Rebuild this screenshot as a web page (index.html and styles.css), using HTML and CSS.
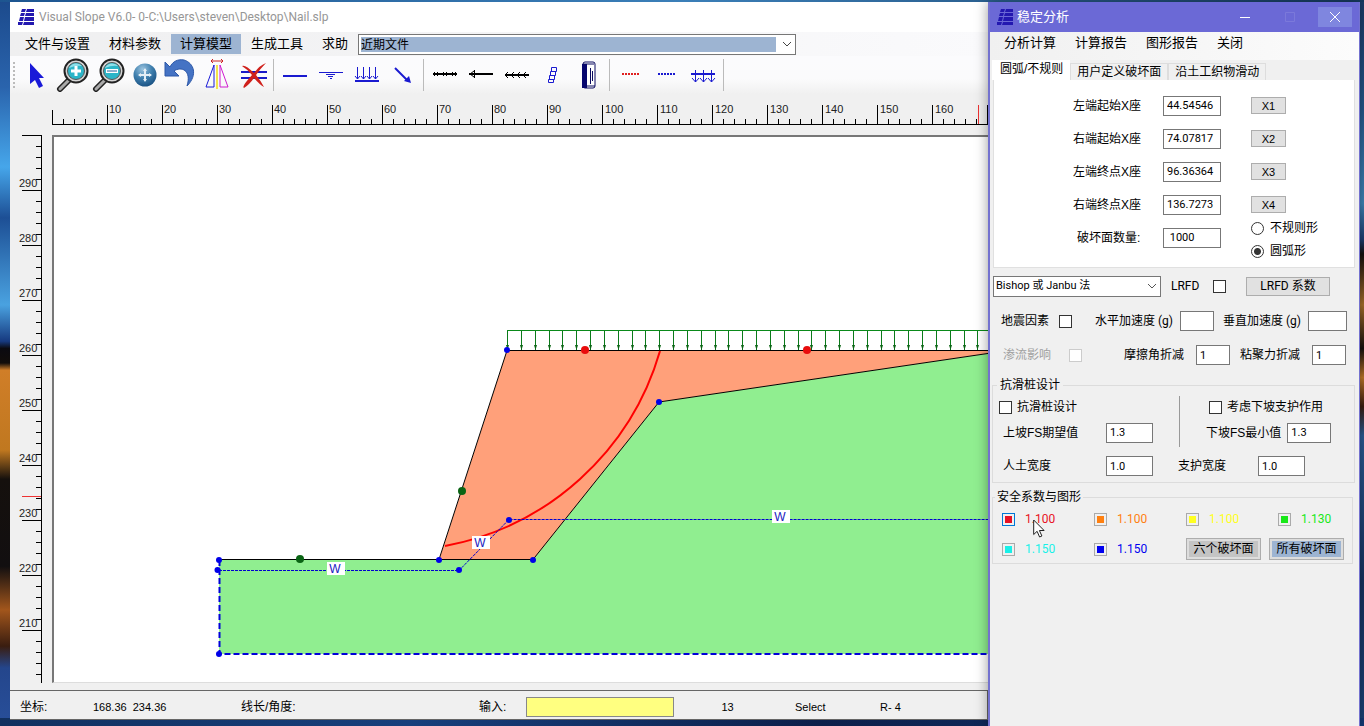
FILE: index.html
```html
<!DOCTYPE html>
<html lang="zh-CN">
<head>
<meta charset="utf-8">
<title>Visual Slope V6.0</title>
<link rel="stylesheet" href="styles.css">
</head>
<body>
<svg class="defs" aria-hidden="true">
  <defs>
    <symbol id="logo" viewBox="0 0 16 16">
      <g fill="#2318b0"><path d="M4 0h4l-1 3H3zM9 0h7v3H8zM3 4h4l-1 3H2zM8 4h8v3H7zM2 8h4l-1 4H1zM7 8h9v4H6zM0 13h5l-1 3H0zM6 13h10v3H5z"/></g>
    </symbol>
    <symbol id="lens" viewBox="0 0 34 34">
      <path d="M14 21L4 31" stroke="#222" stroke-width="6" stroke-linecap="round"/>
      <path d="M13 22L4 31" stroke="#aaa" stroke-width="3" stroke-linecap="round"/>
      <circle cx="20" cy="13" r="11.500" fill="#d5d5d5" stroke="#222" stroke-width="2"/>
      <circle cx="20" cy="13" r="8.500" fill="#2cb5c8" stroke="#555"/>
      <path d="M13 10a8 8 0 0 1 13-2q-6-1-13 2" fill="#8fe0ea"/>
    </symbol>
    <radialGradient id="ball" cx=".4" cy=".25" r=".8"><stop offset="0" stop-color="#9cc4df"/><stop offset=".5" stop-color="#3f7fae"/><stop offset="1" stop-color="#174e80"/></radialGradient>
  </defs>
</svg>
<div class="desktop">
  <main class="window">
    <header class="titlebar"><svg class="logo"><use href="#logo"/></svg><span>Visual Slope V6.0- 0-C:\Users\steven\Desktop\Nail.slp</span></header>
    <nav class="menubar">
      <button>文件与设置</button><button>材料参数</button><button class="active">计算模型</button><button>生成工具</button><button>求助</button>
      <span class="combo recent"><select aria-label="近期文件"><option>近期文件</option></select><svg viewBox="0 0 10 6"><path d="M1 1l4 4 4-4" fill="none" stroke="#444"/></svg></span>
    </nav>
    <div class="toolbar">
      <span class="grip"></span>
      <button aria-label="选择"><svg viewBox="0 0 34 34"><path d="M10 5v21l5-4 4 8 4-2-4-8h5z" fill="#1a1ad8"/></svg></button>
      <button aria-label="放大"><svg viewBox="0 0 34 34"><use href="#lens"/><path d="M20 8v10M15 13h10" stroke="#fff" stroke-width="3"/></svg></button>
      <button aria-label="缩小"><svg viewBox="0 0 34 34"><use href="#lens"/><path d="M14 13h12" stroke="#fff" stroke-width="4"/><path d="M15 13h10" stroke="#1c5f9c" stroke-width="1"/></svg></button>
      <button aria-label="平移"><svg viewBox="0 0 34 34"><circle cx="17" cy="17" r="11.500" fill="url(#ball)"/><path d="M17 11v12M11 17h12" stroke="#e4eef6" stroke-width="2"/><path d="M15 13l2-3 2 3zM15 21l2 3 2-3zM13 15l-3 2 3 2zM21 15l3 2-3 2z" fill="#e4eef6"/></svg></button>
      <button aria-label="撤销"><svg viewBox="0 0 34 34"><path d="M1 4v14h14l-5-5c7-5 18-1 13 15 11-11 7-23-3-26-6-1-11 1-14 7z" fill="#4573c4" stroke="#2d58a8"/></svg></button>
      <button aria-label="镜像"><svg viewBox="0 0 34 34" fill="none"><path d="M14 7v22H6z" stroke="#1a1ad8"/><path d="M20 7v22h8z" stroke="#d01ad0"/><path d="M17 7v24" stroke="#f3e34a" stroke-width="2"/><path d="M11 3h12M13 1l-2 2 2 2M21 1l2 2-2 2" stroke="#c22"/></svg></button>
      <button aria-label="删除"><svg viewBox="0 0 34 34"><path d="M5 14h26M5 20h26" stroke="#1a1ac8" stroke-width="2"/><path d="M6 8q3-2 12 7Q24 7 30 5q-5 5-10 12 5 6 8 12-4-2-10-9-5 7-10 10-3-1 8-13-5-6-10-9z" fill="#d0211c"/></svg></button>
      <span class="sep"></span>
      <button aria-label="线"><svg viewBox="0 0 34 34"><path d="M5 18h24" stroke="#1a1ad0" stroke-width="2"/></svg></button>
      <button aria-label="水位"><svg viewBox="0 0 34 34"><path d="M5 14.500h24M12 16.500h9M14 18.500h5M16 20.500h2" stroke="#1a1ad0"/></svg></button>
      <button aria-label="荷载"><svg viewBox="0 0 34 34" fill="none" stroke="#1a1ad0"><path d="M5 23h24" stroke-width="2"/><path d="M7.500 9v12M13.500 9v12M19.500 9v12M25.500 9v12M5 18l2.500 3 2.500-3M11 18l2.500 3 2.500-3M17 18l2.500 3 2.500-3M23 18l2.500 3 2.500-3"/></svg></button>
      <button aria-label="集中力"><svg viewBox="0 0 34 34"><path d="M9 10l13 13" stroke="#1a1ad0" stroke-width="2"/><path d="M25 25l-7-2 5-5z" fill="#1a1ad0"/></svg></button>
      <span class="sep"></span>
      <button aria-label="土钉"><svg viewBox="0 0 34 34"><path d="M5 16h24" stroke="#000" stroke-width="2"/><path d="M6 14l4 4M6 18l4-4M15 14l4 4M15 18l4-4M24 14l4 4M24 18l4-4" stroke="#000"/></svg></button>
      <button aria-label="锚杆"><svg viewBox="0 0 34 34"><path d="M5 16h24" stroke="#000" stroke-width="2"/><path d="M10.500 12v8M10 13l-4 3 4 3" fill="none" stroke="#000"/></svg></button>
      <button aria-label="土工织物"><svg viewBox="0 0 34 34"><path d="M5 17h24" stroke="#000" stroke-width="2"/><path d="M8 14l-3 3 3 3M14 14l-3 3 3 3M20 14l-3 3 3 3M26 14l-3 3 3 3" fill="none" stroke="#000"/></svg></button>
      <button aria-label="挡墙"><svg viewBox="0 0 34 34" fill="none" stroke="#1a1ad0"><path d="M15.500 9.500h5v4h-5zM14.500 13.500h5v4h-5zM13.500 17.500h5v4h-5zM12.500 21.500h5v3h-5z"/></svg></button>
      <button aria-label="桩"><svg viewBox="0 0 34 34"><rect x="11" y="4" width="12" height="26" rx="2" fill="#fff" stroke="#0a0a60"/><path d="M10 6h5v24h-5z" fill="#06066e"/><path d="M11 6h11M18.500 10v16M20.500 13v10M14 28h9" stroke="#0a0a60"/></svg></button>
      <span class="sep"></span>
      <button aria-label="红点线"><svg viewBox="0 0 34 34"><path d="M8 16h18" stroke="#e02020" stroke-width="2" stroke-dasharray="2 1"/></svg></button>
      <button aria-label="蓝点线"><svg viewBox="0 0 34 34"><path d="M8 16h18" stroke="#1a1ad0" stroke-width="2" stroke-dasharray="2 1"/></svg></button>
      <button aria-label="分布力"><svg viewBox="0 0 34 34" fill="none" stroke="#1a1ad0"><path d="M5 16h24" stroke-width="2"/><path d="M9.500 12v12M17.500 12v12M25.500 12v12M6 20l3.500 4 3.500-4M14 20l3.500 4 3.500-4M22 20l3.500 4 3.500-4"/></svg></button>
      <span class="sep"></span>
    </div>

    <svg class="ruler-x">
      <defs><pattern id="tx" width="55" height="36" patternUnits="userSpaceOnUse"><path d="M.5 11v20" stroke="#000"/><path d="M11.500 25v5M22.500 25v5M33.500 25v5M44.500 25v5" stroke="#000"/></pattern></defs>
      <g transform="translate(42 0)">
        <rect x="2" width="3000" height="36" fill="url(#tx)"/><path d="M.5 16v14M0 30.500h3000" stroke="#000"/><path d="M926.500 11v19" stroke="#e33"/>
        <text x="57" y="19">10</text><text x="112" y="19">20</text><text x="167" y="19">30</text><text x="222" y="19">40</text><text x="277" y="19">50</text><text x="332" y="19">60</text><text x="387" y="19">70</text><text x="442" y="19">80</text><text x="497" y="19">90</text><text x="553" y="19">100</text><text x="608" y="19">110</text><text x="663" y="19">120</text><text x="718" y="19">130</text><text x="773" y="19">140</text><text x="828" y="19">150</text><text x="883" y="19">160</text>
      </g>
    </svg>
    <div class="workspace">
      <svg class="ruler-y">
        <defs><pattern id="ty" width="42" height="55" patternUnits="userSpaceOnUse"><path d="M12 .5h19" stroke="#000"/><path d="M26 11.500h5M26 22.500h5M26 33.500h5M26 44.500h5" stroke="#000"/></pattern></defs>
        <rect width="42" height="100%" fill="url(#ty)"/><path d="M31.500 0v2000" stroke="#000"/><path d="M12 361.500h19" stroke="#e33"/>
        <text x="9" y="52">290</text><text x="9" y="107">280</text><text x="9" y="162">270</text><text x="9" y="217">260</text><text x="9" y="272">250</text><text x="9" y="327">240</text><text x="9" y="382">230</text><text x="9" y="437">220</text><text x="9" y="492">210</text>
      </svg>
      <div class="canvas">
        <svg>
          <defs><pattern id="load" x="506" y="330" width="83" height="20" patternUnits="userSpaceOnUse"><path d="M1.500 0v20M15.500 0v20M29.500 0v20M43.500 0v20M56.500 0v20M70.500 0v20" stroke="#0a7a1a"/><path d="M0 15h3l-1.500 5zM14 15h3l-1.500 5zM28 15h3l-1.500 5zM42 15h3l-1.500 5zM55 15h3l-1.500 5zM69 15h3l-1.500 5z" fill="#0a6414"/></pattern></defs>
          <g transform="translate(-54 -137)">
            <path d="M219 560H533L659 402 1008 350.500H3000V654H219z" fill="#90ee90"/>
            <path d="M507 350.500H1008L659 402 533 560H439z" fill="#ffa07a"/>
            <path d="M219 559.500H533L659 402 1008 350.500M439 559.500L507 350.500H3000" fill="none" stroke="#000"/>
            <rect x="506" y="330" width="2500" height="20" fill="url(#load)"/><path d="M507 330.500H3000" stroke="#0a8a1a"/>
            <path d="M445 546A277 277 0 0 0 660 351" fill="none" stroke="#f00" stroke-width="2"/>
            <path d="M219 570.500H459L509 519.500H3000" fill="none" stroke="#0000d0" stroke-dasharray="3 1"/>
            <path d="M219.500 560V654H3000" fill="none" stroke="#0000d8" stroke-width="2" stroke-dasharray="6 3"/>
            <g fill="#0000e8"><circle cx="219" cy="560" r="3"/><circle cx="217.500" cy="570" r="3"/><circle cx="219" cy="654" r="3"/><circle cx="439" cy="560" r="3"/><circle cx="459" cy="570" r="3"/><circle cx="509" cy="520" r="3"/><circle cx="533" cy="560" r="3"/><circle cx="659" cy="402" r="3"/><circle cx="507" cy="350" r="3"/></g>
            <g fill="#0a6414"><circle cx="300" cy="559" r="4"/><circle cx="462" cy="491" r="4"/></g>
            <g fill="#e80c0c"><circle cx="585" cy="350" r="4"/><circle cx="807" cy="350" r="4"/></g>
            <g fill="#fff"><path d="M327 562h18v13h-18zM472 536h18v13h-18zM772 510h18v13h-18z"/></g>
            <g class="water"><text x="335" y="573">W</text><text x="480" y="547">W</text><text x="780" y="521">W</text></g>
          </g>
        </svg>
      </div>
    </div>
    <footer class="status">
      <span class="s-name">坐标:</span><span class="s-pos">168.36&nbsp; 234.36</span><span class="s-len">线长/角度:</span><label class="s-in">输入: <input type="text"></label><span class="s-num">13</span><span class="s-mode">Select</span><span>R- 4</span>
    </footer>
  </main>

  <aside class="dialog">
    <header class="dialog-title"><svg class="logo"><use href="#logo"/></svg><h1>稳定分析</h1>
      <button aria-label="最小化"><svg viewBox="0 0 10 10"><path d="M0 5.500h10" stroke="#fff"/></svg></button>
      <button aria-label="最大化" disabled><svg viewBox="0 0 10 10"><path d="M.5.5h9v9h-9z" fill="none" stroke="#7b79da"/></svg></button>
      <button class="close" aria-label="关闭"><svg viewBox="0 0 10 10"><path d="M0 0l10 10M10 0L0 10" stroke="#fff"/></svg></button>
    </header>
    <nav class="dialog-menu"><button>分析计算</button><button>计算报告</button><button>图形报告</button><button>关闭</button></nav>
    <div class="tabs" role="tablist"><button role="tab" aria-selected="true">圆弧/不规则</button><button role="tab">用户定义破坏面</button><button role="tab">沿土工织物滑动</button></div>
    <section class="panel">
      <label for="x1">左端起始X座</label><input id="x1" type="text" value="44.54546"><button>X1</button>
      <label for="x2">右端起始X座</label><input id="x2" type="text" value="74.07817"><button>X2</button>
      <label for="x3">左端终点X座</label><input id="x3" type="text" value="96.36364"><button>X3</button>
      <label for="x4">右端终点X座</label><input id="x4" type="text" value="136.7273"><button>X4</button>
      <label for="n" class="count">破坏面数量:</label><input id="n" type="text" value=" 1000">
      <div class="radios"><label><input type="radio" name="shape">不规则形</label><label><input type="radio" name="shape" checked>圆弧形</label></div>
    </section>
    <div class="row method">
      <span class="combo"><select aria-label="方法"><option>Bishop 或 Janbu 法</option></select><svg viewBox="0 0 10 6"><path d="M1 1l4 4 4-4" fill="none" stroke="#555"/></svg></span>
      <label class="lrfd">LRFD<input type="checkbox"></label><button>LRFD 系数</button>
    </div>
    <div class="row quake">
      <label class="first">地震因素<input type="checkbox"></label><label>水平加速度 (g)<input type="text"></label><label>垂直加速度 (g)<input class="wide" type="text"></label>
    </div>
    <div class="row reduce">
      <label class="first off">渗流影响<input type="checkbox" disabled></label><label>摩擦角折减<input type="text" value="1"></label><label>粘聚力折减<input type="text" value="1"></label>
    </div>
    <fieldset class="pile">
      <legend>抗滑桩设计</legend>
      <div class="pair">
        <div class="col left"><label class="check"><input type="checkbox">抗滑桩设计</label><label class="field">上坡FS期望值<input type="text" value="1.3"></label></div>
        <div class="col right"><label class="check"><input type="checkbox">考虑下坡支护作用</label><label class="field">下坡FS最小值<input type="text" value="1.3"></label></div>
      </div>
      <div class="widths"><label class="field">人土宽度<input type="text" value="1.0"></label><label class="field">支护宽度<input type="text" value="1.0"></label></div>
    </fieldset>
    <fieldset class="safety">
      <legend>安全系数与图形</legend>
      <div class="factors">
        <button class="factor red focus"><i></i>1.100</button><button class="factor orange"><i></i>1.100</button><button class="factor yellow"><i></i>1.100</button><button class="factor green"><i></i>1.130</button>
        <button class="factor cyan"><i></i>1.150</button><button class="factor blue"><i></i>1.150</button>
        <div class="actions"><button>六个破坏面</button><button class="on">所有破坏面</button></div>
      </div>
      <svg class="pointer" viewBox="0 0 12 19"><path d="M.7 1v14.500l3.400-3.200 2.500 5.700 2.300-1-2.500-5.500h4.700z" fill="#fff" stroke="#222"/></svg>
    </fieldset>
  </aside>
</div>
</body>
</html>
```
FILE: styles.css
```css
* { box-sizing: border-box; }
body {
  margin: 0;
  font: 12px/16px "Liberation Sans", "Noto Sans CJK SC", sans-serif;
  color: #000;
}
button, input, select { font: inherit; color: inherit; margin: 0; border-radius: 0; }
button { padding: 0; border: 0; background: none; white-space: nowrap; }
label, legend, span { white-space: nowrap; }
.defs { position: absolute; width: 0; height: 0; }

.desktop {
  display: flex;
  height: 100vh;
  overflow: hidden;
  padding: 2px 4px 0 10px;
  background:
    linear-gradient(90deg, #11305f, #173f7c 30%, #0c1f4a 60%, #143a75) bottom / 100% 8px no-repeat,
    linear-gradient(90deg, #1d5590, #3b7fb8 50%, #173a60) top / 100% 2px no-repeat,
    linear-gradient(#1c3c68, #24598c 15%, #3f86b8 28%, #1d3d70 33%, #15100d 35%, #a8702a 42%, #15100d 48%, #c07828 52%, #3a1d10 56%, #2a5c94 60%, #16335f 80%, #1c4478) right / 4px 100% no-repeat,
    linear-gradient(#1c4a8c, #2a64ad 12%, #46a6ea 23%, #1d4f95 30%, #4aa2e0 42%, #173a80 47%, #0b0a10 48%, #120d0a 50%, #d07e28 51%, #c07820 62%, #15100d 66%, #120f10 78%, #a2561c 84%, #3a1d10 89%, #24468c 92%, #284f9a);
}

/* main window */
.window {
  flex: 1;
  min-width: 0;
  display: flex;
  flex-direction: column;
  margin-bottom: 6px;
  background: #f0f0f0;
}
.logo { width: 16px; height: 16px; flex: none; }
.titlebar {
  display: flex;
  align-items: center;
  gap: 5px;
  height: 30px;
  padding-left: 8px;
  background: #fff;
  color: #969696;
  font-family: Roboto, sans-serif;
}
.menubar {
  display: flex;
  align-items: center;
  gap: 1px;
  height: 24px;
  padding-left: 6px;
  background: linear-gradient(90deg, #efeff0, #fafafc);
  font-size: 13px;
}
.menubar button { height: 20px; padding: 0 9px 1px; }
.menubar .active { background: #9db4d2; }
.combo { display: grid; align-items: center; }
.combo select, .combo svg { grid-area: 1 / 1; }
.combo svg { width: 10px; height: 6px; margin-right: 4px; justify-self: end; pointer-events: none; }
.combo select {
  appearance: none;
  width: 100%;
  height: 21px;
  padding: 0 20px 0 2px;
  border: 1px solid #777;
  background: #fff;
}
.recent { width: 438px; font-size: 12px; background: #fff; }
.recent select { padding: 2px 19px 2px 2px; background: #9db4d2 content-box; }
.toolbar {
  display: flex;
  align-items: center;
  height: 38px;
  background: linear-gradient(#fbfbfd, #fbfbfc 60%, #f0f0f0);
}
.toolbar button { width: 36px; height: 34px; flex: none; }
.toolbar button svg { display: block; width: 34px; height: 34px; margin: auto; }
.grip { width: 3px; height: 26px; margin: 0 3px; border-left: 2px dotted #bbb; }
.sep { width: 2px; height: 32px; margin: 0 2px; border-left: 1px solid #bbb; }
.ruler-x { width: 100%; height: 41px; flex: none; font-size: 11px; }
.workspace { flex: 1; min-height: 0; display: flex; padding-bottom: 7px; }
.ruler-y { width: 42px; height: 100%; flex: none; font-size: 11px; }
.ruler-x text, .ruler-y text { fill: #222; }
.canvas {
  flex: 1;
  min-width: 0;
  border: solid #777;
  border-width: 2px 0 0 2px;
  border-bottom: 1px solid #ddd;
  background: #fff;
}
.canvas svg { display: block; width: 100%; height: 100%; }
.water { fill: #2020c0; font-size: 12px; text-anchor: middle; }
.status {
  display: flex;
  align-items: center;
  height: 30px;
  padding: 4px 0 0 10px;
  border: 1px solid #666;
  border-left: 0;
  font-size: 11px;
}
.s-name { width: 73px; font-size: 12px; }
.s-pos { width: 148px; }
.s-len { width: 238px; font-size: 12px; }
.s-in { display: flex; align-items: center; justify-content: space-between; width: 195px; font-size: 12px; }
.s-in input { width: 148px; height: 20px; border: 1px solid #888; background: #ffff80; }
.s-num { width: 121px; text-align: center; padding-right: 14px; }
.s-mode { width: 85px; }

/* analysis dialog */
.dialog {
  position: relative;
  width: 372px;
  flex: none;
  border: solid #7472cf;
  border-width: 0 1px 0 2px;
  background: #f0f0f0;
  box-shadow: 0 0 12px rgba(0, 0, 0, .4);
}
.dialog input[type="text"] {
  width: 34px;
  height: 20px;
  padding: 0 3px;
  border: 1px solid #777;
  background: #fff;
  font-family: Roboto, sans-serif;
  font-size: 11px;
}
.dialog-title {
  display: flex;
  align-items: center;
  height: 30px;
  padding-left: 7px;
  background: #6b69d6;
  color: #fff;
}
.dialog-title h1 { flex: 1; margin: 0 0 0 4px; font-size: 13px; font-weight: 400; }
.dialog-title button { width: 45px; height: 20px; }
.dialog-title svg:not(.logo) { display: block; width: 10px; height: 10px; margin: auto; }
.dialog-title .close { width: 34px; margin: 0 7px 0 6px; background: #7f86df; }
.dialog-menu {
  display: flex;
  gap: 19px;
  height: 28px;
  padding: 0 14px 6px;
  background: linear-gradient(90deg, #f0f0f0, #fcfcfc);
  font-size: 13px;
}
.tabs { display: flex; align-items: flex-end; height: 20px; padding-left: 2px; }
.tabs button { height: 17px; padding: 0 6px; border: 1px solid #ddd; border-bottom: 0; }
.tabs button[aria-selected="true"] { height: 20px; padding: 0 7px 2px 8px; border: 0; background: #fff; }
.panel {
  display: grid;
  grid-template-columns: 90px 88px 1fr;
  grid-auto-rows: 33px;
  align-items: center;
  margin: 0 4px 0 3px;
  padding: 9px 0 13px 79px;
  border: 1px solid #e0e0e0;
  border-top: 0;
  background: #fff;
}
.panel input[type="text"] { width: 58px; }
.panel button { width: 35px; height: 17px; }
.panel button, .method button, .actions button { border: 1px solid #adadad; background: #e1e1e1; }
.panel button { font-size: 11px; }
.count { padding-left: 4px; }
.radios { display: grid; grid-auto-rows: 23px; padding-top: 4px; }
.radios label { display: flex; align-items: center; gap: 6px; }
.dialog input[type="checkbox"], .dialog input[type="radio"] {
  appearance: none;
  width: 13px;
  height: 13px;
  flex: none;
  border: 1px solid #333;
  background: #fff;
}
.dialog input[type="radio"] { border-radius: 50%; }
.dialog input[type="radio"]:checked { background: radial-gradient(circle, #333 3px, #fff 4px); }
.dialog input:disabled { border-color: #ccc; }

.row, .row label, .field, .check { display: flex; align-items: center; }
.row { height: 34px; }
.row label { justify-content: space-between; }
.method { height: 36px; padding-left: 3px; font-family: Roboto, "Noto Sans CJK SC", sans-serif; }
.method .combo { width: 168px; font-size: 11px; }
.method .lrfd { width: 55px; margin: 0 20px 0 10px; }
.method button { width: 84px; height: 19px; }
.quake, .reduce { font-family: Roboto, "Noto Sans CJK SC", sans-serif; }
.quake { padding-left: 11px; }
.quake label { width: 119px; margin-right: 9px; }
.quake .first { width: 71px; margin-right: 23px; }
.quake label:last-child { width: 124px; margin: 0; }
.dialog .quake .wide { width: 39px; }
.dialog .quake input.wide[type="text"] { width: 39px; }
.reduce { padding-left: 13px; }
.reduce label { width: 106px; margin-right: 10px; }
.reduce .first { width: 79px; margin-right: 42px; }
.reduce .off { color: #a0a0a0; }

fieldset { position: relative; min-width: 0; margin: 0 4px 0 2px; border: 1px solid #dcdcdc; }
legend { padding: 0 3px; }
.pile { height: 106px; margin-top: 5px; padding: 3px 0 0 6px; }
.pile legend { margin-left: -2px; }
.pair { display: grid; grid-template-columns: 181px 1fr; }
.col { display: grid; grid-template-rows: 22px 29px; }
.left { margin-bottom: 3px; border-right: 1px solid #999; }
.right { padding-left: 26px; }
.check { gap: 5px; }
.right .check { padding-left: 3px; }
.field input[type="text"] { width: 47px; }
.left .field { width: 154px; padding-left: 4px; justify-content: space-between; }
.right .field { gap: 6px; }
.right .field input[type="text"] { width: 44px; }
.widths { display: flex; gap: 25px; padding: 6px 0 0 4px; }
.widths label { width: 150px; justify-content: space-between; }
.widths label:last-child { width: 127px; }
.safety { height: 75px; margin-right: 6px; margin-top: 6px; padding: 0 0 0 9px; }
.safety legend { margin-left: -7px; padding: 0 2px; }
.factors { display: grid; grid-template-columns: repeat(4, 92px); grid-template-rows: 28px 32px; align-items: center; }
.factor { display: flex; align-items: center; gap: 10px; font: 12px/16px Roboto, sans-serif; }
.factor i { width: 13px; height: 13px; border: 1px solid #aaa; background: content-box currentColor; padding: 2px; }
.focus i { border-color: #0078d7; }
.red { color: #e81123; }
.orange { color: #ff8010; }
.yellow { color: #ffff20; }
.green { color: #18e818; }
.cyan { color: #18f0e8; }
.blue { color: #0000f0; }
.actions { grid-column: 3 / 5; display: flex; gap: 8px; }
.actions button { width: 75px; height: 22px; background: #c4c4c4; box-shadow: inset 0 0 0 2px #ddd; }
.actions .on { background: #9db4d2; }
.pointer { position: absolute; left: 40px; top: 14px; width: 12px; height: 19px; }
```
